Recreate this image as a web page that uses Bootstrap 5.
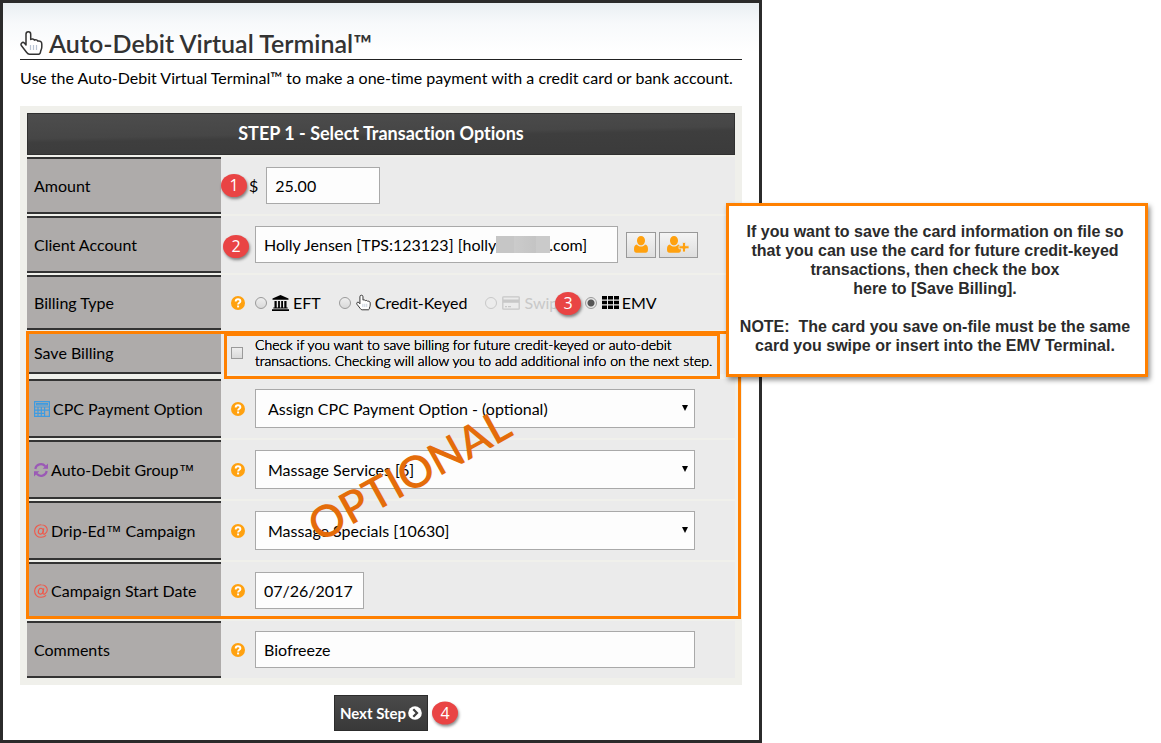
<!DOCTYPE html>
<html lang="en">
<head>
<meta charset="utf-8">
<meta name="viewport" content="width=device-width, initial-scale=1">
<title>Auto-Debit Virtual Terminal</title>
<link href="https://cdn.jsdelivr.net/npm/bootstrap@5.3.0/dist/css/bootstrap.min.css" rel="stylesheet">
<style>
  :root { --vt-orange: #ff8000; --vt-amber: #ffa10f; --vt-dark: #2b2b2b; }
  body { font-family: Lato, "Liberation Sans", sans-serif; font-size: 16px; line-height: 20px; color: #000; background: #fff; font-variant-ligatures: none; }

  .vt-panel { flex: 722 1 0; min-width: 0; border: 3px solid var(--vt-dark); padding: 26px 17px 9px;
    background: linear-gradient(#e9eff2, #f7f9fb 20px, #fff 50px) no-repeat; }
  .vt-side { flex: 399 1 0; min-width: 0; }
  .vt-title { font-size: 25px; line-height: 28px; padding-bottom: 2px; font-weight: 600; color: #333; border-bottom: 1px solid #222; gap: 6px; }
  .vt-intro { margin: 8px 0 18px; }
  .vt-tm { font-family: "Liberation Sans", Arial, sans-serif; line-height: 1; }

  .vt-form { background: #f0f0eb; padding: 7px; }
  .vt-head { height: 42px; border: 1px solid #303030; color: #fff; font-size: 18px; line-height: 18px; padding-bottom: 2px; font-weight: 700; margin-bottom: 2px;
    background: linear-gradient(179deg, #4d4d4d, #464646 47%, #3e3e3e 55%, #3b3b3b); }
  .vt-line { min-height: 57px; margin-bottom: 2px; }
  .vt-line.vt-final { margin-bottom: 0; }
  .vt-short { min-height: 55px; }
  .vt-tall { min-height: 59px; }
  .vt-save { min-height: 42px; margin-bottom: 5px; }
  .vt-name { flex: 0 0 194px; background: #aeabaa; border: solid #333; border-width: 2px 0; padding: 0 7px; gap: 3px; }
  .vt-cell { background: #ebebeb; padding: 0 0 0 10px; min-width: 0; }

  .vt-input { height: 37px; border: 1px solid #a9a9a9; border-radius: 0; background: #fdfdfd; color: #000; padding: 0 8px; font-size: 16px; }
  .vt-select { height: 39px; border: 1px solid #a9a9a9; border-radius: 0; color: #000; padding: 0 24px 0 12px; font-size: 16px;
    background: #fdfdfd url("data:image/svg+xml,%3Csvg xmlns='http://www.w3.org/2000/svg' viewBox='0 0 6 6'%3E%3Cpath d='M0 0h6L3 6z'/%3E%3C/svg%3E") no-repeat right 6px top 15px / 6px 6px; }
  .vt-wide { margin-right: 40px; }
  .vt-amount { width: 114px; }
  .vt-date { width: 109px; }
  .vt-account { width: 363px; }
  .vt-dollar { margin-left: 18px; }
  .vt-mask { left: 241px; top: 10px; width: 54px; height: 17px; background: linear-gradient(90deg, #c6c6c6 34%, #cbcbcb 34%, #c4c4c4 75%, #cacaca 75%); }
  .vt-iconbtn { height: 26px; padding: 0 7px; margin-right: 3px; border: 1px solid #999; border-radius: 0; background: linear-gradient(#f4f4f4, #dedede); }

  .vt-help { width: 14px; height: 14px; flex: none; margin-right: 10px; padding: 0; border: 0; background: none; line-height: 0; }
  .vt-tick { appearance: none; width: 12px; height: 12px; flex: none; margin: 0; border: 1px solid #9a9a9a; background: linear-gradient(#eee, #d9d9d9); }
  .vt-tick[type=radio] { border-radius: 50%; }
  .vt-tick[type=radio]:checked { background: radial-gradient(#555 0 3px, #e8e8e8 4px); }
  .vt-tick:disabled { border-color: #c8c8c8; background: #ececec; }
  .vt-choice { margin-right: 18px; }
  .vt-choice svg { margin: 0 4px 0 5px; flex: none; }
  .vt-choice:last-of-type svg { margin-right: 3px; }
  .vt-off { color: #c8c8c8; }
  .vt-note { font-size: 14px; line-height: 16px; font-weight: 300; text-shadow: 0 0 0 #000, 0 0 0 #000; }

  .vt-num { width: 26px; height: 23px; flex: none; border-radius: 50%; background: #e94444; color: #fff; font-size: 16px; line-height: 23px; text-align: center;
    font-family: "Open Sans", sans-serif; box-shadow: 1px 2px 3px rgba(0,0,0,.45); }
  .vt-num-one { left: 0; top: 17px; }
  .vt-num-two { left: 2px; top: 19px; }
  .vt-num-three { left: 334px; top: 17px; }
  .vt-frame { border: 3px solid var(--vt-orange); pointer-events: none; }
  .vt-frame-group { inset: -1px -6px 0 -1px; }
  .vt-frame-save { inset: 1px 15px -5px 3px; }
  .vt-stamp { left: 270px; top: 118px; font-size: 44px; line-height: 48px; font-weight: 600; color: #e46c0a; transform: rotate(-29deg); pointer-events: none; }

  .vt-actions { padding-top: 10px; }
  .vt-next { height: 36px; border: 1px solid #2c2c2c; border-radius: 0; padding: 0 5px; color: #fff; font-weight: 700; font-size: 15px; line-height: 20px; gap: 2px; background: linear-gradient(#4a4a4a, #393939); }
  .vt-callout { margin: 203px 13px 0 -36px; border: 3px solid var(--vt-orange); background: #fff; padding: 16px 4px 19px 0; color: #2b2b2b;
    font-family: "Liberation Sans", Arial, sans-serif; font-weight: 700; font-size: 16px; line-height: 19px; box-shadow: 2px 3px 5px rgba(0,0,0,.45); }
</style>
</head>
<body>
<svg width="0" height="0" class="position-absolute" aria-hidden="true">
  <symbol id="i-hand" viewBox="0 0 23 24">
    <path d="M6 14V3.200a2.300 2.300 0 0 1 4.700 0v5.200c1-.9 3-.6 3.700.8 1.200-.8 2.800-.3 3.400.9 1.900-.5 4 .4 4 2.800v3.100c0 1.800-.8 3-1.200 4.500-.2 1.700-.5 2.700-2 2.700H9.500c-1.200 0-2-.5-2.600-1.500L1.500 14.800C0 12.500 2.600 10.400 4.400 12z" fill="#fff" stroke="#333" stroke-width="1.500" stroke-linejoin="round"/>
    <path d="M10.500 14v5M13.500 14v5M16.500 14v5" stroke="#b9c4d4" stroke-width="1.200"/>
  </symbol>
  <symbol id="i-help" viewBox="0 0 14 14">
    <circle cx="7" cy="7" r="7" fill="#ffa10f"/>
    <path d="M4.700 5.400C4.700 3.900 5.700 3.200 7 3.200s2.400.8 2.400 2c0 1.600-2.300 1.600-2.300 3.300" fill="none" stroke="#fff" stroke-width="1.900"/>
    <path d="M6.100 9.500h2v1.900h-2z" fill="#fff"/>
  </symbol>
  <symbol id="i-at" viewBox="0 0 14 14">
    <g fill="none" stroke="#f0584a" stroke-width="1.100"><ellipse cx="6.800" cy="7.200" rx="2.400" ry="2.900" transform="rotate(20 6.800 7.200)"/><path d="M9.800 4.300 8.900 8.600c-.3 1.600 1 1.900 2.200 1.100C12.600 8.700 13.300 7.300 13.300 6 13.300 3 10.700.7 7.200.7A6.400 6.400 0 0 0 .6 7.100c0 3.600 2.800 6.200 6.500 6.200 2 0 3.800-.7 5-1.900"/></g>
  </symbol>
  <symbol id="i-user" viewBox="0 0 14 17"><path d="M7 0a4 4.400 0 0 1 4 4.400c0 2.600-1.700 4.900-4 4.900S3 7 3 4.400A4 4.400 0 0 1 7 0zM3 8.500c.9 1.400 2.300 2.100 4 2.100s3.100-.7 4-2.100c2.300.3 3 2.300 3 5 0 2-.8 3.300-2.500 3.300h-9C.8 16.800 0 15.500 0 13.500c0-2.700.7-4.700 3-5z" fill="#ffa10f"/></symbol>
</svg>

<div class="d-flex align-items-start">
  <main class="vt-panel">
    <h1 class="vt-title d-flex align-items-center m-0"><svg width="23" height="24"><use href="#i-hand"/></svg>Auto-Debit Virtual Terminal™</h1>
    <p class="vt-intro">Use the Auto-Debit Virtual Terminal™ to make a one-time payment with a credit card or bank account.</p>

    <form>
      <div class="vt-form">
        <div class="vt-head d-flex align-items-center justify-content-center">STEP 1 - Select Transaction Options</div>

        <div class="vt-line d-flex">
          <label class="vt-name d-flex align-items-center" for="amount">Amount</label>
          <div class="vt-cell flex-fill d-flex align-items-center position-relative">
            <span class="vt-num vt-num-one position-absolute">1</span>
            <span class="vt-dollar me-2">$</span>
            <input class="vt-input vt-amount" id="amount" type="text" value="25.00">
          </div>
        </div>

        <div class="vt-line d-flex">
          <label class="vt-name d-flex align-items-center" for="account">Client Account</label>
          <div class="vt-cell flex-fill d-flex align-items-center position-relative">
            <span class="vt-num vt-num-two position-absolute">2</span>
            <span class="ms-4 me-2 position-relative d-flex">
              <input class="vt-input vt-account" id="account" type="text" value="Holly Jensen [TPS:123123] [holly&nbsp;&nbsp;&nbsp;&nbsp;&nbsp;&nbsp;&nbsp;&nbsp;&nbsp;&nbsp;&nbsp;&nbsp;&nbsp;.com]">
              <span class="vt-mask position-absolute"></span>
            </span>
            <button class="vt-iconbtn d-flex align-items-center" type="button" aria-label="Client"><svg width="14" height="17"><use href="#i-user"/></svg></button>
            <button class="vt-iconbtn d-flex align-items-center" type="button" aria-label="Add client"><svg width="23" height="17" viewBox="0 0 23 17"><use href="#i-user" width="14" height="17"/><path d="M15.500 6.500h3v3.300H22v3h-3.500V16h-3v-3.200H12v-3h3.500z" fill="#ffa10f" stroke="#e8e8e8" stroke-width=".8"/></svg></button>
          </div>
        </div>

        <div class="vt-line vt-short d-flex" role="radiogroup" aria-labelledby="billing">
          <div class="vt-name d-flex align-items-center" id="billing">Billing Type</div>
          <div class="vt-cell flex-fill d-flex align-items-center position-relative">
            <button class="vt-help" type="button" aria-label="Help"><svg width="14" height="14"><use href="#i-help"/></svg></button>
            <label class="vt-choice d-flex align-items-center"><input class="vt-tick" type="radio" name="billing"><svg width="17" height="16" viewBox="0 0 17 16"><path d="M8.500 0 16.500 3.500v1.300H.5V3.500zM2.500 6h2.200v6.500h1.400V6h1.800v6.500h1.300V6H11v6.500h1.300V6h2.200v6.500h1.200v1H1.300v-1h1.200zM0 14.300h17V16H0z"/></svg>EFT</label>
            <label class="vt-choice d-flex align-items-center"><input class="vt-tick" type="radio" name="billing"><svg width="15" height="17"><use href="#i-hand"/></svg>Credit-Keyed</label>
            <label class="vt-choice vt-off d-flex align-items-center"><input class="vt-tick" type="radio" name="billing" disabled><svg width="18" height="14" viewBox="0 0 18 14"><path d="M1.500.8h15q.7 0 .7.700v11q0 .7-.7.700h-15q-.7 0-.7-.7v-11q0-.7.7-.7z" fill="none" stroke="#c8c8c8" stroke-width="1.300"/><path d="M1 3.500h16v3.200H1zM3 10h2v1.200H3zM6 10h3v1.200H6z" fill="#c8c8c8"/></svg>Swipe</label>
            <label class="vt-choice d-flex align-items-center"><input class="vt-tick" type="radio" name="billing" checked><svg width="17" height="13" viewBox="0 0 17 13"><path d="M0 0h5v3.500H0zM6 0h5v3.500H6zM12 0h5v3.500h-5zM0 4.700h5v3.500H0zM6 4.700h5v3.500H6zM12 4.700h5v3.500h-5zM0 9.400h5v3.500H0zM6 9.400h5v3.500H6zM12 9.400h5v3.500h-5z"/></svg>EMV</label>
            <span class="vt-num vt-num-three position-absolute">3</span>
          </div>
        </div>

        <div class="position-relative">
          <div class="vt-line vt-save d-flex">
            <label class="vt-name d-flex align-items-center" for="save">Save Billing</label>
            <div class="vt-cell flex-fill d-flex align-items-center position-relative">
              <input class="vt-tick me-2" type="checkbox" id="save">
              <span class="vt-note ps-1 text-nowrap">Check if you want to save billing for future credit-keyed or auto-debit<br>transactions. Checking will allow you to add additional info on the next step.</span>
              <span class="vt-frame vt-frame-save position-absolute"></span>
            </div>
          </div>

          <div class="vt-line vt-tall d-flex">
            <label class="vt-name d-flex align-items-center" for="cpc"><svg width="16" height="16" viewBox="0 0 16 16"><path d="M.6.600h14.800v14.800H.6zM2.600 2.600h10.800V4H2.600zM.6 6h14.800M.6 9.200h14.800M.6 12.300h9.900M4 6v9.400M7.300 6v9.400M10.600 6v9.400" fill="none" stroke="#3f9be0" stroke-width="1.200"/></svg>CPC Payment Option</label>
            <div class="vt-cell flex-fill d-flex align-items-center">
              <button class="vt-help" type="button" aria-label="Help"><svg width="14" height="14"><use href="#i-help"/></svg></button>
              <select class="form-select vt-select vt-wide" id="cpc"><option>Assign CPC Payment Option - (optional)</option></select>
            </div>
          </div>

          <div class="vt-line vt-tall d-flex">
            <label class="vt-name d-flex align-items-center" for="group"><svg width="14" height="14" viewBox="0 0 14 14"><path d="M1.300 6A5.700 5.700 0 0 1 11.300 3.200M12.700 8A5.700 5.700 0 0 1 2.700 10.800" fill="none" stroke="#9b59b6" stroke-width="2.100"/><path d="M14 .5v5.300H8.700zM0 13.500V8.200h5.300z" fill="#9b59b6"/></svg><span>Auto-Debit Group<span class="vt-tm">™</span></span></label>
            <div class="vt-cell flex-fill d-flex align-items-center">
              <button class="vt-help" type="button" aria-label="Help"><svg width="14" height="14"><use href="#i-help"/></svg></button>
              <select class="form-select vt-select vt-wide" id="group"><option>Massage Services [6]</option></select>
            </div>
          </div>

          <div class="vt-line vt-tall d-flex">
            <label class="vt-name d-flex align-items-center" for="drip"><svg width="14" height="14"><use href="#i-at"/></svg><span>Drip-Ed<span class="vt-tm">™</span> Campaign</span></label>
            <div class="vt-cell flex-fill d-flex align-items-center">
              <button class="vt-help" type="button" aria-label="Help"><svg width="14" height="14"><use href="#i-help"/></svg></button>
              <select class="form-select vt-select vt-wide" id="drip"><option>Massage Specials [10630]</option></select>
            </div>
          </div>

          <div class="vt-line d-flex">
            <label class="vt-name d-flex align-items-center" for="start"><svg width="14" height="14"><use href="#i-at"/></svg>Campaign Start Date</label>
            <div class="vt-cell flex-fill d-flex align-items-center">
              <button class="vt-help" type="button" aria-label="Help"><svg width="14" height="14"><use href="#i-help"/></svg></button>
              <input class="vt-input vt-date" id="start" type="text" value="07/26/2017">
            </div>
          </div>
          <span class="vt-frame vt-frame-group position-absolute"></span>
          <span class="vt-stamp position-absolute">OPTIONAL</span>
        </div>

        <div class="vt-line vt-final d-flex">
          <label class="vt-name d-flex align-items-center" for="comments">Comments</label>
          <div class="vt-cell flex-fill d-flex align-items-center">
            <button class="vt-help" type="button" aria-label="Help"><svg width="14" height="14"><use href="#i-help"/></svg></button>
            <input class="vt-input vt-wide flex-fill" id="comments" type="text" value="Biofreeze">
          </div>
        </div>
      </div>

      <div class="vt-actions d-flex justify-content-center">
        <div class="position-relative">
          <button class="vt-next d-flex align-items-center" type="submit">Next Step<svg width="14" height="14" viewBox="0 0 14 14"><circle cx="7" cy="7" r="6.800" fill="#fff"/><path d="M5.300 3.300 9 7l-3.700 3.700" fill="none" stroke="#3d3d3d" stroke-width="2.200"/></svg></button>
          <span class="vt-num position-absolute start-100 top-50 translate-middle-y ms-1">4</span>
        </div>
      </div>
    </form>
  </main>

  <aside class="vt-side">
    <div class="vt-callout position-relative text-center">
      If you want to save the card information on file so<br>that you can use the card for future credit-keyed<br>transactions, then check the box<br>here to [Save Billing].<br><br>NOTE:&nbsp; The card you save on-file must be the same<br>card you swipe or insert into the EMV Terminal.
    </div>
  </aside>
</div>
<script src="https://cdn.jsdelivr.net/npm/bootstrap@5.3.0/dist/js/bootstrap.bundle.min.js"></script>
</body>
</html>
